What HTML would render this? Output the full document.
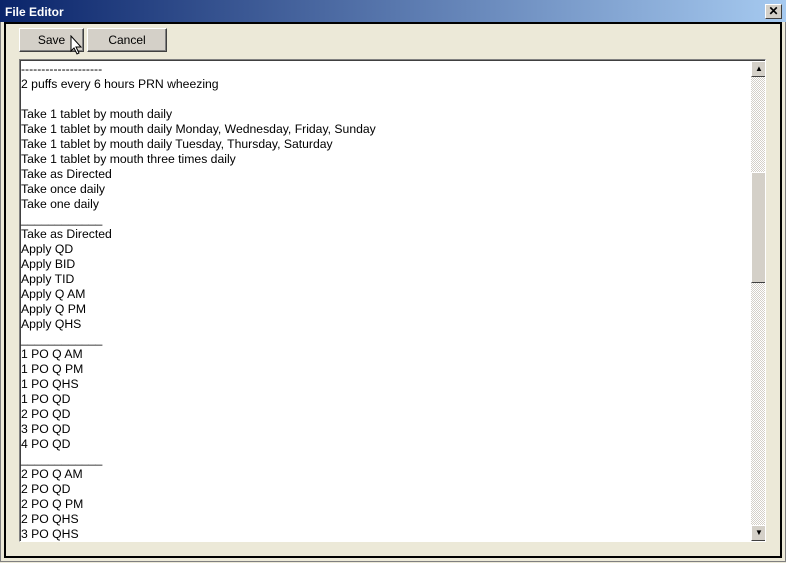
<!DOCTYPE html>
<html><head><style>
body{margin:0;width:786px;height:563px;overflow:hidden;background:#ece9d8;font-family:"Liberation Sans",Arial,sans-serif;position:relative}
.title{position:absolute;left:0;top:0;width:786px;height:22px;background:linear-gradient(to right,#0a246a,#a6caf0);}
.title span{position:absolute;left:5px;top:5px;color:#fff;font-weight:bold;font-size:12px}
.x{position:absolute;left:765px;top:4px;width:15px;height:13px;background:#d4d0c8;border:1px solid;border-color:#fff #404040 #404040 #fff;font-size:12px;line-height:13px;text-align:center;font-weight:bold}
.frame{position:absolute;left:4px;top:22px;width:774px;height:532px;border:2px solid #000;background:#ece9d8}
.outer{position:absolute;left:0;top:0;width:784px;height:561px;border:1px solid #808080;border-top:none}
.btn{position:absolute;top:28px;height:22px;background:#d4d0c8;border:1px solid;border-color:#fff #404040 #404040 #fff;box-shadow:inset -1px -1px #808080;font-size:12px;text-align:center;line-height:23px}
.ta{position:absolute;left:19px;top:59px;width:745px;height:481px;border:1px solid;border-color:#808080 #fff #fff #808080;box-shadow:inset 1px 1px #404040;background:#fff;overflow:hidden}
.txt{position:absolute;left:1px;top:2px;font-size:12.2px;line-height:15px;white-space:pre;color:#000}
.sb{position:absolute;left:731px;top:1px;width:16px;height:480px;background:repeating-conic-gradient(#fff 0 25%,#d4d0c8 0 50%) 0 0/2px 2px}
.sbb{position:absolute;left:0;width:14px;height:14px;background:#d4d0c8;border:1px solid;border-color:#fff #404040 #404040 #fff;font-size:8px;text-align:center;line-height:14px}
</style></head><body>
<div class="outer"></div>
<div class="title"><span>File Editor</span></div>
<div class="x">✕</div>
<div class="frame"></div>
<div class="btn" style="left:19px;width:63px">Save</div>
<div class="btn" style="left:87px;width:78px">Cancel</div>
<svg style="position:absolute;left:70px;top:35px" width="14" height="22"><path d="M1 1 L1 16 L4 13 L7 19 L9 18 L6 12 L11 12 Z" fill="#fff" stroke="#000"/></svg>
<div class="ta">
<div class="txt">--------------------
2 puffs every 6 hours PRN wheezing

Take 1 tablet by mouth daily
Take 1 tablet by mouth daily Monday, Wednesday, Friday, Sunday
Take 1 tablet by mouth daily Tuesday, Thursday, Saturday
Take 1 tablet by mouth three times daily
Take as Directed
Take once daily
Take one daily
____________
Take as Directed
Apply QD
Apply BID
Apply TID
Apply Q AM
Apply Q PM
Apply QHS
____________
1 PO Q AM
1 PO Q PM
1 PO QHS
1 PO QD
2 PO QD
3 PO QD
4 PO QD
____________
2 PO Q AM
2 PO QD
2 PO Q PM
2 PO QHS
3 PO QHS</div>
<div class="sb">
<div class="sbb" style="top:0">▲</div>
<div class="sbb" style="top:111px;height:109px"></div>
<div class="sbb" style="top:464px">▼</div>
</div>
</div>
</body></html>
